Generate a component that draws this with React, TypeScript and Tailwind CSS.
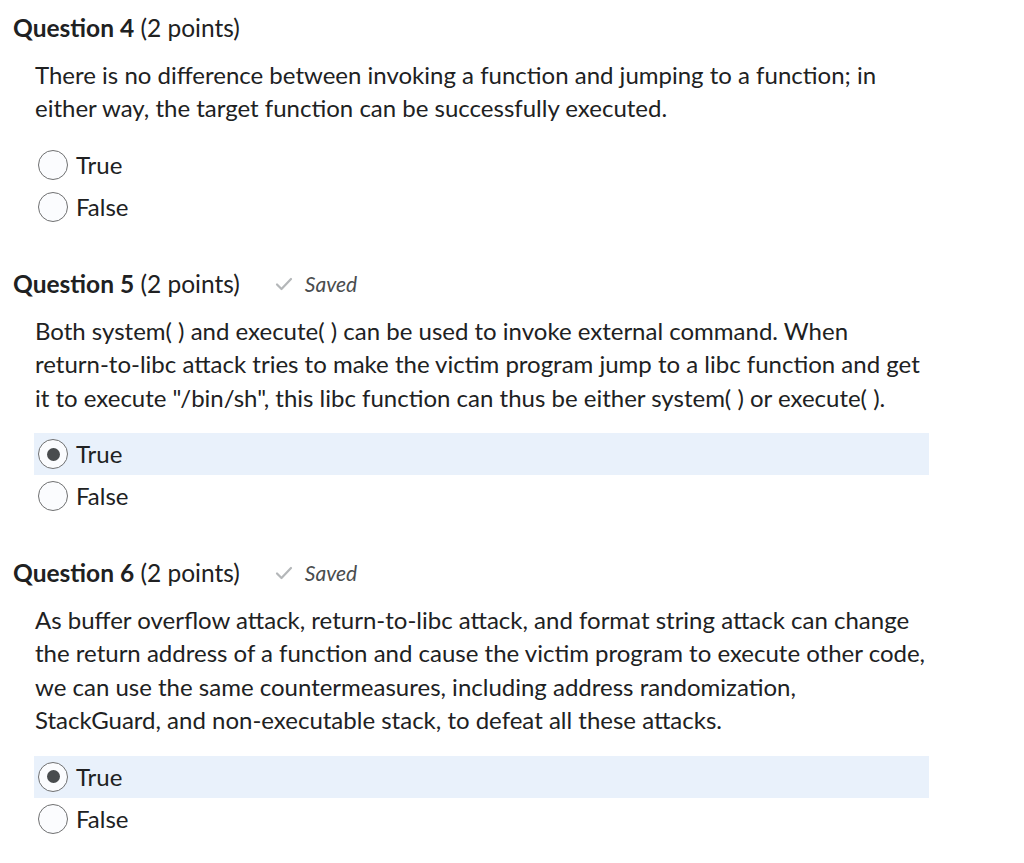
import React from "react";

type Q = {
  num: number;
  saved: boolean;
  lines: string[];
  selected: "True" | "False" | null;
};

const questions: Q[] = [
  {
    num: 4,
    saved: false,
    lines: [
      "There is no difference between invoking a function and jumping to a function; in",
      "either way, the target function can be successfully executed.",
    ],
    selected: null,
  },
  {
    num: 5,
    saved: true,
    lines: [
      "Both system( ) and execute( ) can be used to invoke external command. When",
      "return-to-libc attack tries to make the victim program jump to a libc function and get",
      'it to execute "/bin/sh", this libc function can thus be either system( ) or execute( ).',
    ],
    selected: "True",
  },
  {
    num: 6,
    saved: true,
    lines: [
      "As buffer overflow attack, return-to-libc attack, and format string attack can change",
      "the return address of a function and cause the victim program to execute other code,",
      "we can use the same countermeasures, including address randomization,",
      "StackGuard, and non-executable stack, to defeat all these attacks.",
    ],
    selected: "True",
  },
];

function Radio({ checked }: { checked: boolean }) {
  return (
    <span className="w-[30px] h-[30px] rounded-full border border-[#6f7071] bg-[#fbfcfe] flex items-center justify-center shrink-0">
      {checked && <span className="w-[13px] h-[13px] rounded-full bg-[#494c4e]" />}
    </span>
  );
}

function Option({ label, checked }: { label: string; checked: boolean }) {
  return (
    <div className={`h-[42px] flex items-center gap-[8px] pl-[4px] ${checked ? "bg-[#e9f1fb]" : ""}`}>
      <Radio checked={checked} />
      <span className="text-[24px] leading-[30px]">{label}</span>
    </div>
  );
}

export default function App() {
  return (
    <div
      className="min-h-screen bg-white text-[#202122] pt-[13px] pl-[13px] w-[1024px]"
      style={{ fontFamily: "Lato, 'Noto Sans', sans-serif" }}
    >
      {questions.map((q, i) => (
        <div key={q.num} className={i > 0 ? "mt-[41px]" : ""}>
          <div className="h-[30px] flex items-center">
            <h2 className="text-[24.5px] leading-[30px]">
              <span className="font-bold">Question {q.num}</span> (2 points)
            </h2>
            {q.saved && (
              <span className="ml-[35px] flex items-center gap-[12px] text-[#494c4e] italic text-[21px]">
                <svg width="18" height="14" viewBox="0 0 18 14" fill="none">
                  <path d="M2 7.5 L6.5 12 L16 2" stroke="#b4b7b9" strokeWidth="2.2" strokeLinecap="round" strokeLinejoin="round" />
                </svg>
                Saved
              </span>
            )}
          </div>
          <div className="ml-[22px] mt-[15px] text-[24px] leading-[33.4px]">
            {q.lines.map((l) => (
              <div key={l}>{l}</div>
            ))}
          </div>
          <div className="ml-[21px] mt-[19px] w-[895px]">
            <Option label="True" checked={q.selected === "True"} />
            <Option label="False" checked={q.selected === "False"} />
          </div>
        </div>
      ))}
    </div>
  );
}
